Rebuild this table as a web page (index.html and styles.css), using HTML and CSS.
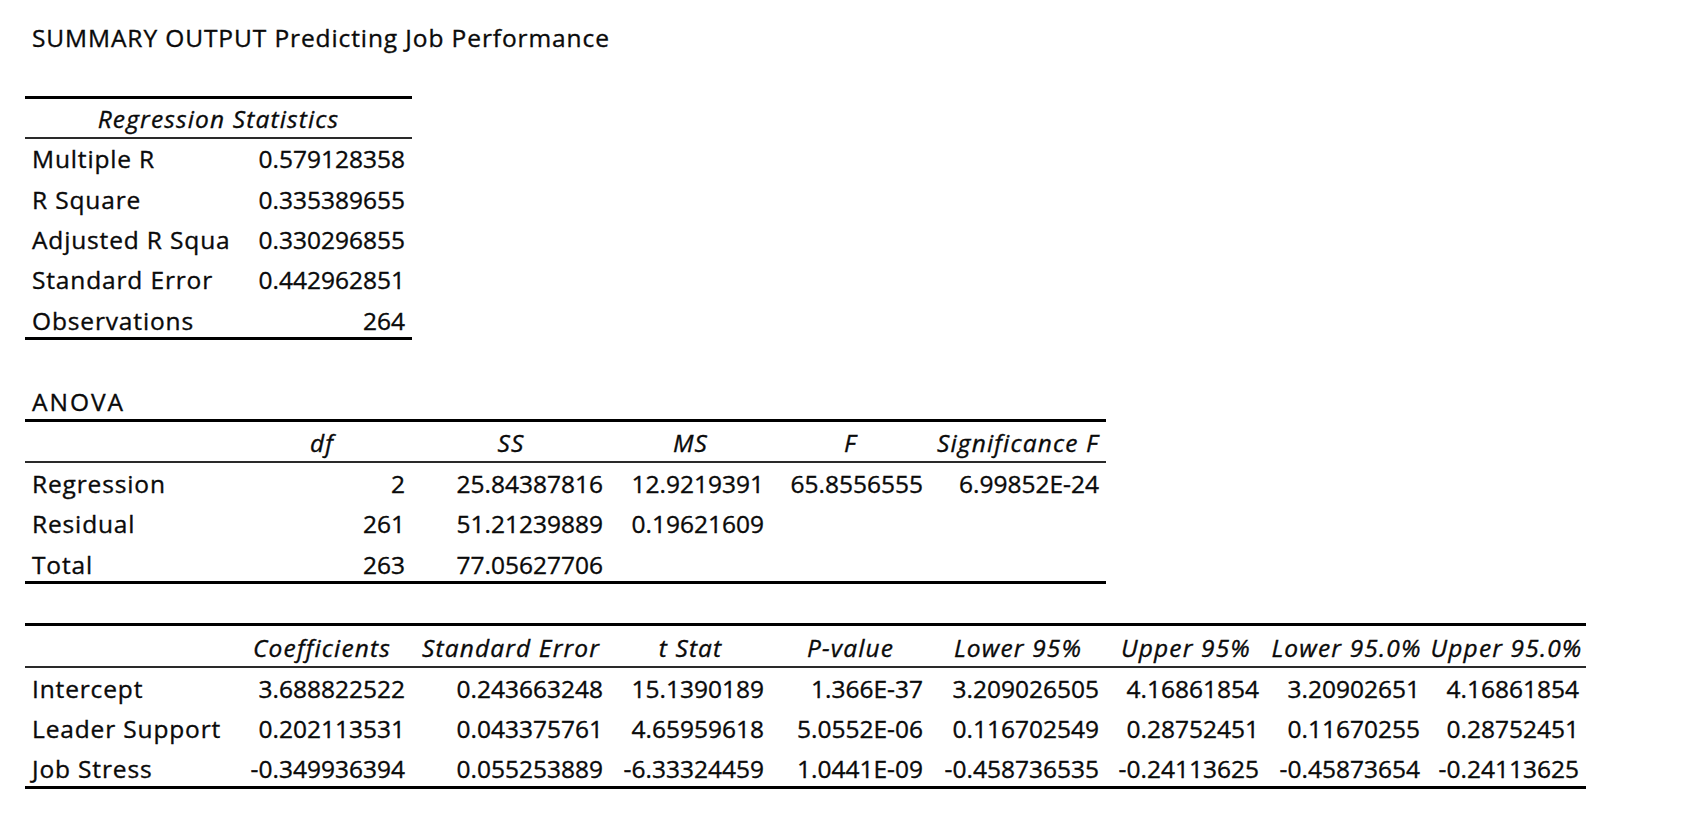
FILE: index.html
```html
<!DOCTYPE html>
<html lang="en">
<head>
<meta charset="utf-8">
<title>SUMMARY OUTPUT Predicting Job Performance</title>
<link rel="stylesheet" href="styles.css">
</head>
<body>
<div class="sheet">
  <div class="line title">SUMMARY OUTPUT Predicting Job Performance</div>
  <div class="gap g1"></div>

  <div class="grid t1">
    <div class="cell hd span2">Regression Statistics</div>
    <div class="cell">Multiple R</div><div class="cell num">0.579128358</div>
    <div class="cell">R Square</div><div class="cell num">0.335389655</div>
    <div class="cell">Adjusted R Squa</div><div class="cell num">0.330296855</div>
    <div class="cell">Standard Error</div><div class="cell num">0.442962851</div>
    <div class="cell last">Observations</div><div class="cell num last">264</div>
  </div>

  <div class="gap g2"></div>
  <div class="line label">ANOVA</div>

  <div class="grid t2">
    <div class="cell hd"></div>
    <div class="cell hd">df</div>
    <div class="cell hd">SS</div>
    <div class="cell hd">MS</div>
    <div class="cell hd">F</div>
    <div class="cell hd">Significance F</div>

    <div class="cell">Regression</div>
    <div class="cell num">2</div>
    <div class="cell num">25.84387816</div>
    <div class="cell num">12.9219391</div>
    <div class="cell num">65.8556555</div>
    <div class="cell num">6.99852E-24</div>

    <div class="cell">Residual</div>
    <div class="cell num">261</div>
    <div class="cell num">51.21239889</div>
    <div class="cell num">0.19621609</div>
    <div class="cell"></div>
    <div class="cell"></div>

    <div class="cell last">Total</div>
    <div class="cell num last">263</div>
    <div class="cell num last">77.05627706</div>
    <div class="cell last"></div>
    <div class="cell last"></div>
    <div class="cell last"></div>
  </div>

  <div class="gap g3"></div>

  <div class="grid t3">
    <div class="cell hd"></div>
    <div class="cell hd">Coefficients</div>
    <div class="cell hd">Standard Error</div>
    <div class="cell hd">t Stat</div>
    <div class="cell hd">P-value</div>
    <div class="cell hd">Lower 95%</div>
    <div class="cell hd">Upper 95%</div>
    <div class="cell hd">Lower 95.0%</div>
    <div class="cell hd">Upper 95.0%</div>

    <div class="cell">Intercept</div>
    <div class="cell num">3.688822522</div>
    <div class="cell num">0.243663248</div>
    <div class="cell num">15.1390189</div>
    <div class="cell num">1.366E-37</div>
    <div class="cell num">3.209026505</div>
    <div class="cell num">4.16861854</div>
    <div class="cell num">3.20902651</div>
    <div class="cell num">4.16861854</div>

    <div class="cell">Leader Support</div>
    <div class="cell num">0.202113531</div>
    <div class="cell num">0.043375761</div>
    <div class="cell num">4.65959618</div>
    <div class="cell num">5.0552E-06</div>
    <div class="cell num">0.116702549</div>
    <div class="cell num">0.28752451</div>
    <div class="cell num">0.11670255</div>
    <div class="cell num">0.28752451</div>

    <div class="cell last">Job Stress</div>
    <div class="cell num last">-0.349936394</div>
    <div class="cell num last">0.055253889</div>
    <div class="cell num last">-6.33324459</div>
    <div class="cell num last">1.0441E-09</div>
    <div class="cell num last">-0.458736535</div>
    <div class="cell num last">-0.24113625</div>
    <div class="cell num last">-0.45873654</div>
    <div class="cell num last">-0.24113625</div>
  </div>
</div>
</body>
</html>
```

FILE: styles.css
```css
* {
  box-sizing: border-box;
  margin: 0;
  padding: 0;
}

html, body {
  background: #ffffff;
}

body {
  margin: 0;
  color: #0a0a0a;
  font-family: "Open Sans", "Noto Sans", sans-serif;
  font-size: 24.5px;
  -webkit-text-stroke: 0.35px #0a0a0a;
}

.sheet {
  padding: 16px 0 0 25px;
}

.line {
  display: flex;
  align-items: flex-end;
  padding: 0 7px;
  line-height: 30px;
  white-space: nowrap;
}

.title {
  height: 40.5px;
  padding-bottom: 4px;
  letter-spacing: 0.9px;
}

.label {
  height: 39.5px;
  padding-bottom: 2px;
  letter-spacing: 2px;
}

.gap.g1 { height: 39px; }
.gap.g2 { height: 39.5px; }
.gap.g3 { height: 39px; }

.grid {
  display: grid;
  grid-auto-rows: auto;
}

.t1 { grid-template-columns: 207px 180px; }
.t2 { grid-template-columns: 207px 180px 198px 161px 159px 176px; }
.t3 { grid-template-columns: 207px 180px 198px 161px 159px 176px 160px 161px 159px; }

.cell {
  height: 40.35px;
  display: flex;
  align-items: flex-end;
  justify-content: flex-start;
  padding: 0 0 4.5px 7px;
  line-height: 30px;
  white-space: nowrap;
  overflow: hidden;
  letter-spacing: 0.85px;
}

.num {
  justify-content: flex-end;
  padding-right: 7px;
  padding-left: 0;
  letter-spacing: 0;
}

.hd {
  font-style: italic;
  justify-content: center;
  padding: 0 0 5px;
  letter-spacing: 1.15px;
  box-shadow: inset 0 3px 0 #000000, inset 0 -2px 0 #2a2a2a;
}

.t1 .hd { height: 43px; }
.t2 .hd { height: 44px; }
.t3 .hd { height: 44.5px; }

.span2 {
  grid-column: span 2;
}

.last {
  box-shadow: inset 0 -3px 0 #000000;
}
```
